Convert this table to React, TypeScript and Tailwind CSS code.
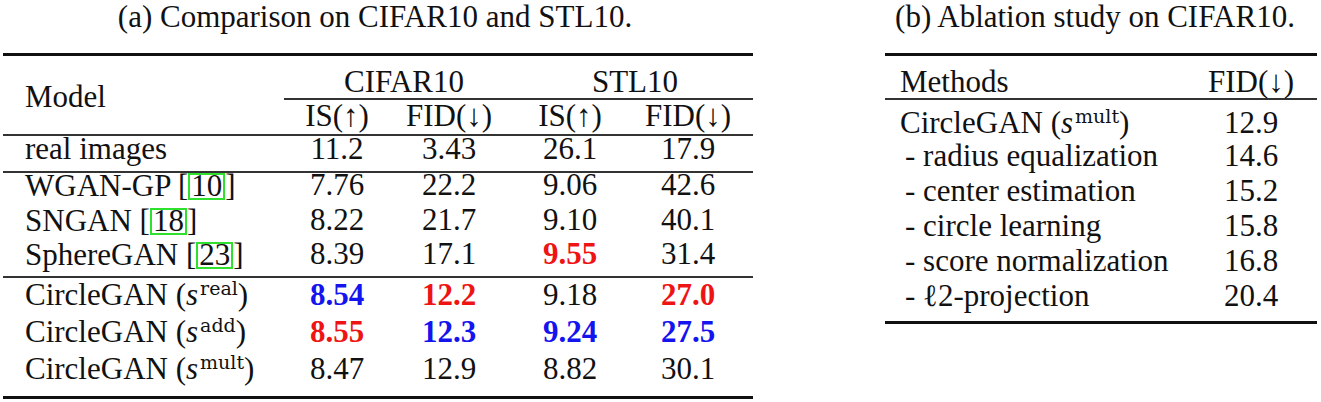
import React from 'react';

type Cell = { text: React.ReactNode; tone?: 'red' | 'blue' };

const toneClass = {
  red: 'font-bold text-[#ee1414]',
  blue: 'font-bold text-[#1414ee]',
};

// s with a roman superscript, as in the paper's math mode
function S({ sup }: { sup: string }) {
  return (
    <>
      <span className="italic">s</span>
      <span className="ml-[2px] font-[family-name:'DejaVu_Serif',serif] text-[19px] leading-none align-[10px]">{sup}</span>
    </>
  );
}

function Cite({ n }: { n: string }) {
  return (
    <>
      [
      <span className="inline-block border-2 border-[#2fe02f] px-[1px] pb-[2px] leading-[21px]">{n}</span>]
    </>
  );
}

function Row({ label, cells, className }: { label: React.ReactNode; cells: Cell[]; className: string }) {
  return (
    <div className={`grid grid-cols-[278px_112px_112px_130px_118px] ${className}`}>
      <div className="pl-[22px] whitespace-nowrap">{label}</div>
      {cells.map((c, i) => (
        <div key={i} className={`text-center ${i === 3 ? 'pr-[12px]' : ''} ${c.tone ? toneClass[c.tone] : ''}`}>
          {c.text}
        </div>
      ))}
    </div>
  );
}

const plain = (...v: string[]): Cell[] => v.map((text) => ({ text }));

export default function App() {
  return (
    <div className="flex h-[402px] w-[1321px] bg-white pl-[3px] text-[31px] text-[#111] font-[family-name:'Liberation_Serif','DejaVu_Serif',serif]">
      {/* (a) comparison table */}
      <div className="w-[750px]">
        <div className="h-[34px] pr-[6px] text-center leading-[34px]">(a) Comparison on CIFAR10 and STL10.</div>
        <div className="mt-[19px] h-[3px] bg-[#111]" />
        <div className="grid grid-cols-[278px_112px_112px_130px_118px]">
          <div className="row-span-3 pl-[22px] pt-[24px] leading-[34px]">Model</div>
          <div className="col-span-2 h-[42px] pl-[22px] pt-[9px] text-center leading-[34px]">CIFAR10</div>
          <div className="col-span-2 h-[42px] pl-[12px] pt-[9px] text-center leading-[34px]">STL10</div>
          <div className="col-span-4 ml-[3px] h-[2px] bg-[#333]" />
          <div className="h-[34px] text-center leading-[32px]">IS(↑)</div>
          <div className="h-[34px] text-center leading-[32px]">FID(↓)</div>
          <div className="h-[34px] text-center leading-[32px]">IS(↑)</div>
          <div className="h-[34px] pr-[12px] text-center leading-[32px]">FID(↓)</div>
        </div>
        <div className="h-[2px] bg-[#333]" />
        <Row label="real images" cells={plain('11.2', '3.43', '26.1', '17.9')} className="h-[35px] leading-[26px]" />
        <div className="h-[2px] bg-[#333]" />
        <Row
          label={<>WGAN-GP <Cite n="10" /></>}
          cells={plain('7.76', '22.2', '9.06', '42.6')}
          className="h-[35px] leading-[24px]"
        />
        <Row
          label={<>SNGAN <Cite n="18" /></>}
          cells={plain('8.22', '21.7', '9.10', '40.1')}
          className="h-[34px] leading-[24px]"
        />
        <Row
          label={<>SphereGAN <Cite n="23" /></>}
          cells={[{ text: '8.39' }, { text: '17.1' }, { text: '9.55', tone: 'red' }, { text: '31.4' }]}
          className="h-[34px] leading-[24px]"
        />
        <div className="h-[2px] bg-[#333]" />
        <Row
          label={<>CircleGAN (<S sup="real" />)</>}
          cells={[
            { text: '8.54', tone: 'blue' },
            { text: '12.2', tone: 'red' },
            { text: '9.18' },
            { text: '27.0', tone: 'red' },
          ]}
          className="h-[37px] leading-[34px]"
        />
        <Row
          label={<>CircleGAN (<S sup="add" />)</>}
          cells={[
            { text: '8.55', tone: 'red' },
            { text: '12.3', tone: 'blue' },
            { text: '9.24', tone: 'blue' },
            { text: '27.5', tone: 'blue' },
          ]}
          className="h-[37px] leading-[34px]"
        />
        <Row
          label={<>CircleGAN (<S sup="mult" />)</>}
          cells={plain('8.47', '12.9', '8.82', '30.1')}
          className="h-[36px] leading-[34px]"
        />
        <div className="mt-[8px] h-[3px] bg-[#111]" />
      </div>

      {/* (b) ablation table */}
      <div className="ml-[132px] w-[432px]">
        <div className="h-[34px] pr-[12px] text-center leading-[34px]">(b) Ablation study on CIFAR10.</div>
        <div className="mt-[19px] h-[3px] bg-[#111]" />
        <div className="grid h-[42px] grid-cols-[1fr_132px] pt-[9px] leading-[34px]">
          <div className="pl-[15px]">Methods</div>
          <div className="text-center">FID(↓)</div>
        </div>
        <div className="h-[2px] bg-[#333]" />
        <div className="grid h-[41px] grid-cols-[1fr_132px] pt-[6px] leading-[34px]">
          <div className="pl-[15px]">CircleGAN (<S sup="mult" />)</div>
          <div className="text-center">12.9</div>
        </div>
        {[
          ['- radius equalization', '14.6'],
          ['- center estimation', '15.2'],
          ['- circle learning', '15.8'],
          ['- score normalization', '16.8'],
          ['- ℓ2-projection', '20.4'],
        ].map(([m, v]) => (
          <div key={m} className="grid h-[35px] grid-cols-[1fr_132px] leading-[29px]">
            <div className="pl-[20px]">{m}</div>
            <div className="text-center">{v}</div>
          </div>
        ))}
        <div className="mt-[5px] h-[3px] bg-[#111]" />
      </div>
    </div>
  );
}
